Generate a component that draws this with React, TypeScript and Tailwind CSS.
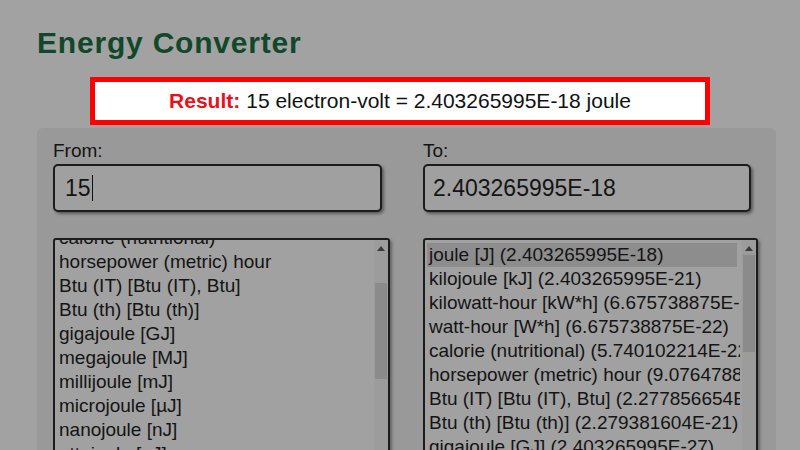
import React from 'react';

const fromUnits = [
  'calorie (nutritional)',
  'horsepower (metric) hour',
  'Btu (IT) [Btu (IT), Btu]',
  'Btu (th) [Btu (th)]',
  'gigajoule [GJ]',
  'megajoule [MJ]',
  'millijoule [mJ]',
  'microjoule [µJ]',
  'nanojoule [nJ]',
  'attojoule [aJ]',
];

const toUnits = [
  'joule [J] (2.403265995E-18)',
  'kilojoule [kJ] (2.403265995E-21)',
  'kilowatt-hour [kW*h] (6.675738875E-25)',
  'watt-hour [W*h] (6.675738875E-22)',
  'calorie (nutritional) (5.740102214E-22)',
  'horsepower (metric) hour (9.076478826E-25)',
  'Btu (IT) [Btu (IT), Btu] (2.277856654E-21)',
  'Btu (th) [Btu (th)] (2.279381604E-21)',
  'gigajoule [GJ] (2.403265995E-27)',
  'megajoule [MJ] (2.403265995E-24)',
];

function Scrollbar({ thumbTop, thumbHeight }: { thumbTop: number; thumbHeight: number }) {
  return (
    <div className="relative w-[14px] shrink-0 bg-[#9c9c9c]">
      <svg className="absolute left-[3px] top-[6px]" width="8" height="5" viewBox="0 0 8 5">
        <path d="M0 5 L4 0 L8 5 Z" fill="#3a3a3a" />
      </svg>
      <div
        className="absolute left-[1px] w-[12px] bg-[#8b8b8b]"
        style={{ top: thumbTop, height: thumbHeight }}
      />
    </div>
  );
}

function UnitList({
  items,
  selected,
  offset,
  thumbTop,
  thumbHeight,
  width,
}: {
  items: string[];
  selected?: number;
  offset: string;
  thumbTop: number;
  thumbHeight: number;
  width: string;
}) {
  return (
    <div
      className={`${width} shrink-0 h-[240px] flex rounded-[3px] border-2 border-[#1c1c1c] bg-[#a1a1a1] shadow-[2px_2px_3px_rgba(0,0,0,0.35)] overflow-hidden`}
    >
      <div className="flex-1 min-w-0 overflow-hidden px-[2px]">
        <ul className={offset}>
          {items.map((item, i) => (
            <li
              key={item}
              className={`h-[24px] leading-[24px] pl-[2px] whitespace-nowrap overflow-hidden text-[19px] text-[#141414] ${
                i === selected ? 'bg-[#8d8d8d] mr-[3px]' : ''
              }`}
            >
              {item}
            </li>
          ))}
        </ul>
      </div>
      <Scrollbar thumbTop={thumbTop} thumbHeight={thumbHeight} />
    </div>
  );
}

export default function App() {
  return (
    <div
      className="w-[800px] h-[450px] overflow-hidden bg-[#a2a2a2] flex flex-col"
      style={{ fontFamily: '"Liberation Sans", Arial, sans-serif' }}
    >
      <h1 className="shrink-0 ml-[37px] mt-[25px] text-[30px] leading-[36px] font-bold tracking-[0.8px] text-[#11472a]">
        Energy Converter
      </h1>

      {/* Result */}
      <div className="shrink-0 mx-auto mt-[16px] w-[620px] h-[48px] border-[5px] border-[#ff0000] bg-white flex items-center justify-center text-[21px] text-[#111]">
        <span className="font-bold text-[#e8111a] mr-[6px]">Result:</span>
        15 electron-volt = 2.403265995E-18 joule
      </div>

      {/* Converter panel */}
      <div className="shrink-0 ml-[37px] mt-[3px] w-[739px] h-[400px] rounded-t-[6px] bg-[#999999] pl-[16px] pt-[11px] flex gap-[33px]">
        <div className="flex flex-col w-[337px]">
          <label className="shrink-0 text-[19px] leading-[24px] text-[#141414]">From:</label>
          <div className="shrink-0 mt-[1px] w-[329px] h-[48px] rounded-[5px] border-2 border-[#1c1c1c] bg-[#a0a0a0] shadow-[2px_2px_3px_rgba(0,0,0,0.4)] flex items-center pl-[10px] text-[23px] text-[#141414]">
            15<span className="inline-block w-[1px] h-[26px] bg-[#111] ml-[1px]" />
          </div>
          <div className="shrink-0 mt-[26px]">
            <UnitList
              items={fromUnits}
              offset="-mt-[14px]"
              thumbTop={43}
              thumbHeight={96}
              width="w-[337px]"
            />
          </div>
        </div>

        <div className="flex flex-col w-[335px]">
          <label className="shrink-0 text-[19px] leading-[24px] text-[#141414]">To:</label>
          <div className="shrink-0 mt-[1px] w-[328px] h-[48px] rounded-[5px] border-2 border-[#1c1c1c] bg-[#a0a0a0] shadow-[2px_2px_3px_rgba(0,0,0,0.4)] flex items-center pl-[8px] text-[23px] text-[#141414]">
            2.403265995E-18
          </div>
          <div className="shrink-0 mt-[26px]">
            <UnitList
              items={toUnits}
              selected={0}
              offset="mt-[3px]"
              thumbTop={15}
              thumbHeight={97}
              width="w-[335px]"
            />
          </div>
        </div>
      </div>
    </div>
  );
}
